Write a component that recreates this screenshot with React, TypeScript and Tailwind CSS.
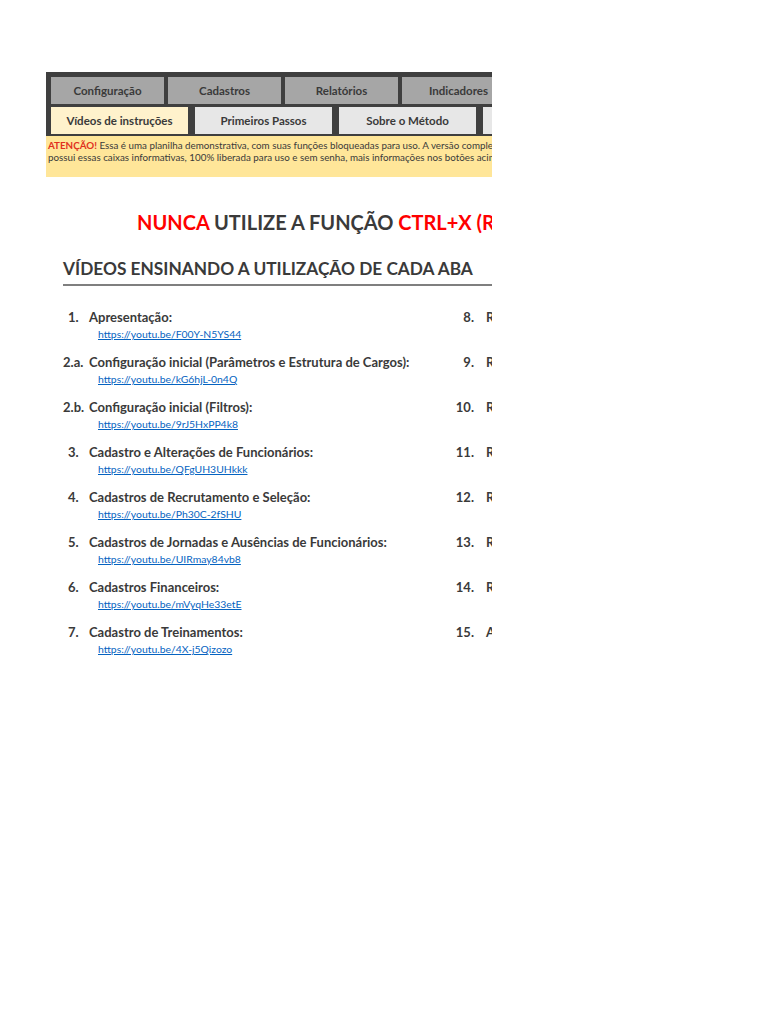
import React from "react";

const left = [
  { n: "1.", t: "Apresentação:", u: "https://youtu.be/F00Y-N5YS44", wide: false },
  { n: "2.a.", t: "Configuração inicial (Parâmetros e Estrutura de Cargos):", u: "https://youtu.be/kG6hjL-0n4Q", wide: true },
  { n: "2.b.", t: "Configuração inicial (Filtros):", u: "https://youtu.be/9rJ5HxPP4k8", wide: true },
  { n: "3.", t: "Cadastro e Alterações de Funcionários:", u: "https://youtu.be/QFgUH3UHkkk", wide: false },
  { n: "4.", t: "Cadastros de Recrutamento e Seleção:", u: "https://youtu.be/Ph30C-2fSHU", wide: false },
  { n: "5.", t: "Cadastros de Jornadas e Ausências de Funcionários:", u: "https://youtu.be/UIRmay84vb8", wide: false },
  { n: "6.", t: "Cadastros Financeiros:", u: "https://youtu.be/mVyqHe33etE", wide: false },
  { n: "7.", t: "Cadastro de Treinamentos:", u: "https://youtu.be/4X-j5Qizozo", wide: false },
];

const right = [
  { n: "8.", t: "Relatórios de Funcionários:" },
  { n: "9.", t: "Relatórios de Recrutamento:" },
  { n: "10.", t: "Relatórios de Jornadas:" },
  { n: "11.", t: "Relatórios de Ausências:" },
  { n: "12.", t: "Relatórios Financeiros:" },
  { n: "13.", t: "Relatórios de Treinamentos:" },
  { n: "14.", t: "Relatórios Gerais:" },
  { n: "15.", t: "Acompanhamento de Indicadores:" },
];

const font = { fontFamily: "Lato, 'Open Sans', 'Liberation Sans', sans-serif" };

export default function App() {
  return (
    <div className="w-[768px] h-[1024px] bg-white overflow-hidden" style={font}>
      <div className="ml-[46px] pt-[72px] w-[446px] overflow-hidden">
        <div className="w-[700px] bg-[#3f3f3f] pt-[5px] pl-[5px] pb-[2px]">
          <div className="flex gap-[4px]">
            {["Configuração", "Cadastros", "Relatórios", "Indicadores", "Dashboards"].map((t) => (
              <div
                key={t}
                className="w-[113px] h-[27px] bg-[#a6a6a6] flex items-center justify-center text-[11.5px] font-bold text-[#3a3a3a] whitespace-nowrap"
              >
                {t}
              </div>
            ))}
          </div>
          <div className="flex gap-[7px] mt-[3px]">
            {["Vídeos de instruções", "Primeiros Passos", "Sobre o Método", "Contato"].map((t, i) => (
              <div
                key={t}
                className={
                  "w-[137px] h-[27px] flex items-center justify-center text-[11.5px] font-bold text-[#3a3a3a] whitespace-nowrap " +
                  (i === 0 ? "bg-[#fff2cc]" : "bg-[#e7e7e7]")
                }
              >
                {t}
              </div>
            ))}
          </div>
        </div>
        <div className="w-[446px] h-[41px] bg-[#ffe699] pl-[2px] pt-[3px] text-[9.8px] leading-[12px] text-[#3a3a3a] whitespace-nowrap">
          <div>
            <span className="font-bold text-[#e0301e]">ATENÇÃO!</span> Essa é uma planilha demonstrativa, com suas funções bloqueadas para uso. A versão completa não
          </div>
          <div>possui essas caixas informativas, 100% liberada para uso e sem senha, mais informações nos botões acima.</div>
        </div>

        <div className="mt-[32px] pl-[91px] whitespace-nowrap text-[20px] leading-[26px] font-bold text-[#3a3a3a]">
          <span className="text-[#ff0000]">NUNCA</span> UTILIZE A FUNÇÃO <span className="text-[#ff0000]">CTRL+X (RECORTAR)</span> NAS PLANILHAS
        </div>

        <div className="mt-[22px] ml-[17px] w-[429px] border-b-2 border-[#7f7f7f] pb-[3px] whitespace-nowrap text-[17.3px] leading-[24px] font-bold text-[#3a3a3a]">
          VÍDEOS ENSINANDO A UTILIZAÇÃO DE CADA ABA
        </div>

        <div className="mt-[23px] ml-[17px] flex w-[700px]">
          <div className="w-[392px] flex flex-col">
            {left.map((it) => (
              <div key={it.n} className="h-[45px]">
                <div className="flex text-[13px] leading-[17px] font-bold text-[#3a3a3a] whitespace-nowrap">
                  <span className={"w-[26px] " + (it.wide ? "" : "pl-[5px]")}>{it.n}</span>
                  <span>{it.t}</span>
                </div>
                <div className="pl-[35px] mt-[2px] text-[10.4px] leading-[13px] text-[#0563c1] underline whitespace-nowrap">
                  {it.u}
                </div>
              </div>
            ))}
          </div>
          <div className="flex flex-col">
            {right.map((it) => (
              <div key={it.n} className="h-[45px]">
                <div className="flex text-[13px] leading-[17px] font-bold text-[#3a3a3a] whitespace-nowrap">
                  <span className="w-[19px] text-right">{it.n}</span>
                  <span className="ml-[12px]">{it.t}</span>
                </div>
              </div>
            ))}
          </div>
        </div>
      </div>
    </div>
  );
}
